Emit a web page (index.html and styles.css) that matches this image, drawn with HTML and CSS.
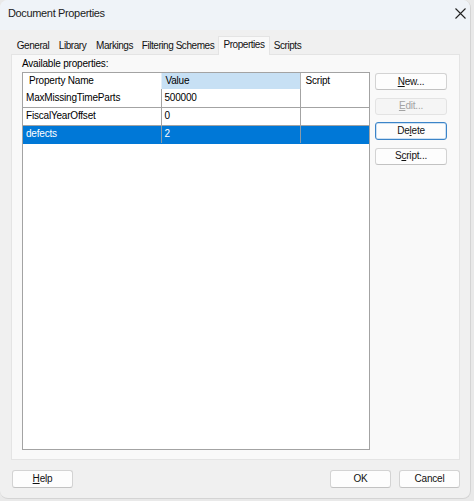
FILE: index.html
```html
<!DOCTYPE html>
<html>
<head>
<meta charset="utf-8">
<link rel="stylesheet" href="styles.css">
</head>
<body>
<div class="window">
  <div class="titlebar">
    <span class="title">Document Properties</span>
    <svg class="close" width="11" height="11" viewBox="0 0 11 11"><path d="M0.5 0.5 L10.5 10.5 M10.5 0.5 L0.5 10.5" stroke="#222" stroke-width="1.1" fill="none"/></svg>
  </div>
  <div class="content">
    <div class="tabs">
      <div class="tab t-general">General</div>
      <div class="tab t-library">Library</div>
      <div class="tab t-markings">Markings</div>
      <div class="tab t-filter">Filtering Schemes</div>
      <div class="tab active">Properties</div>
      <div class="tab t-scripts">Scripts</div>
    </div>
    <div class="panel">
      <div class="left">
        <div class="label">Available properties:</div>
        <div class="grid">
          <table>
            <colgroup><col class="c1"><col class="c2"><col class="c3"></colgroup>
            <thead>
              <tr><th class="h1">Property Name</th><th class="h2 sorted">Value</th><th class="h3">Script</th></tr>
            </thead>
            <tbody>
              <tr><td>MaxMissingTimeParts</td><td>500000</td><td></td></tr>
              <tr><td>FiscalYearOffset</td><td>0</td><td></td></tr>
              <tr class="sel"><td>defects</td><td>2</td><td></td></tr>
            </tbody>
          </table>
        </div>
      </div>
      <div class="side">
        <button class="btn"><u>N</u>ew...</button>
        <button class="btn disabled"><u>E</u>dit...</button>
        <button class="btn focus">De<u>l</u>ete</button>
        <button class="btn">S<u>c</u>ript...</button>
      </div>
    </div>
    <div class="footer">
      <button class="btn wide"><u>H</u>elp</button>
      <div class="spacer"></div>
      <button class="btn wide">OK</button>
      <button class="btn wide">Cancel</button>
    </div>
  </div>
</div>
</body>
</html>
```

FILE: styles.css
```css
* { box-sizing: border-box; }
html, body {
  margin: 0;
  padding: 0;
  width: 474px;
  height: 501px;
  background: #e9e9e9;
  overflow: hidden;
}
body {
  font-family: "Liberation Sans", Arial, sans-serif;
  font-size: 10px;
  letter-spacing: -0.2px;
  color: #000;
}
.window {
  width: 471px;
  height: 499px;
  background: #f0f0f0;
  border-radius: 8px;
  border-right: 1px solid #d4d4d4;
  border-bottom: 1px solid #d4d4d4;
  overflow: hidden;
  display: flex;
  flex-direction: column;
}
.titlebar {
  height: 30px;
  background: #eff3f8;
  display: flex;
  align-items: center;
  padding: 0 3px 4px 8px;
}
.title {
  flex: 1;
  font-size: 11px;
  letter-spacing: -0.35px;
  color: #1b1b1b;
}
.close { margin-right: 1px; }
.content {
  flex: 1;
  display: flex;
  flex-direction: column;
  padding: 6px 10px 0 11px;
}
.tabs {
  display: flex;
  height: 18px;
  padding-left: 1px;
  letter-spacing: -0.45px;
}
.tab {
  margin-top: 2px;
  height: 16px;
  padding: 2px 0 0 0;
  text-align: center;
  color: #111;
}
.t-general { width: 42px; }
.t-library { width: 37px; }
.t-markings { width: 47px; }
.t-filter { width: 80px; }
.t-scripts { width: 35px; }
.tab.active {
  margin-top: 0;
  height: 19px;
  width: 52px;
  background: #f9f9f9;
  border: 1px solid #e4e4e4;
  border-bottom: none;
  padding-top: 2px;
  position: relative;
  z-index: 1;
}
.panel {
  height: 406px;
  background: #f9f9f9;
  border: 1px solid #e4e4e4;
  display: flex;
  padding: 3px 0 0 10px;
}
.left {
  display: flex;
  flex-direction: column;
  width: 348px;
}
.label {
  height: 14px;
  line-height: 11px;
}
.grid {
  height: 378px;
  background: #fff;
  border: 1px solid #a3a3a3;
}
table {
  width: 100%;
  border-collapse: collapse;
  table-layout: fixed;
}
col.c1 { width: 138px; }
col.c2 { width: 139px; }
col.c3 { width: 69px; }
th {
  height: 16px;
  font-weight: normal;
  text-align: left;
  padding: 0 0 2px 4px;
  vertical-align: middle;
}
th.h1 { padding-left: 6px; }
th.h2 { border-left: 1px solid #e4eef7; }
th.h3 { border-left: 1px solid #b5b5b5; padding-left: 5px; }
th.sorted { background: #c7e0f4; }
td {
  height: 18px;
  padding: 0 0 1px 3px;
  border-bottom: 1px solid #a3a3a3;
  vertical-align: middle;
  white-space: nowrap;
}
td + td { border-left: 1px solid #a3a3a3; padding-left: 3px; }
tr.sel td {
  background: #0078d7;
  color: #fff;
  border-bottom-color: #0078d7;
}
tr.sel td + td { border-left-color: #8a9aa8; }
.side {
  display: flex;
  flex-direction: column;
  gap: 7.5px;
  padding: 15px 0 0 5px;
}
.btn {
  font-family: inherit;
  font-size: 10px;
  letter-spacing: -0.2px;
  color: #111;
  width: 72px;
  height: 17px;
  padding: 0 0 1px 0;
  background: #fdfdfd;
  border: 1px solid #d3d3d3;
  border-bottom-color: #c2c2c2;
  border-radius: 3px;
  text-align: center;
}
.btn u { text-decoration-thickness: 1px; text-underline-offset: 1px; }
.btn.disabled {
  background: #f5f5f5;
  border-color: #e3e3e3;
  color: #a3a3a3;
}
.btn.focus {
  height: 18px;
  border: 1px solid #3b84c8;
  box-shadow: inset 0 0 0 0.5px #9cc3e8;
}
.footer {
  display: flex;
  align-items: center;
  padding: 10px 0 0 1px;
  gap: 8px;
}
.footer .spacer { flex: 1; }
.btn.wide {
  width: 61px;
  height: 18px;
}
```
